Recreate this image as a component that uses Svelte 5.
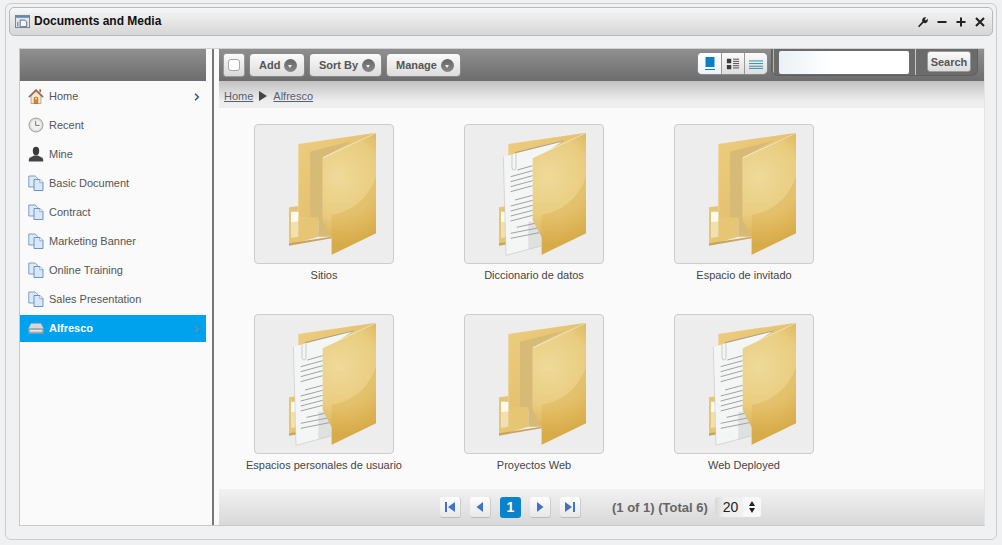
<script>
  const items = [
    { label: 'Home', icon: 'home', arrow: true },
    { label: 'Recent', icon: 'clock' },
    { label: 'Mine', icon: 'user' },
    { label: 'Basic Document', icon: 'docs' },
    { label: 'Contract', icon: 'docs' },
    { label: 'Marketing Banner', icon: 'docs' },
    { label: 'Online Training', icon: 'docs' },
    { label: 'Sales Presentation', icon: 'docs' },
    { label: 'Alfresco', icon: 'drive', arrow: true, active: true }
  ];
  const folders = [
    { name: 'Sitios', docs: false },
    { name: 'Diccionario de datos', docs: true },
    { name: 'Espacio de invitado', docs: false },
    { name: 'Espacios personales de usuario', docs: true },
    { name: 'Proyectos Web', docs: false },
    { name: 'Web Deployed', docs: true }
  ];
  const textLines = [
    [172,150,218,137],[152,170,218,152],[152,185,218,167],[152,200,218,182],[152,215,218,197],
    [165,240,218,226],[152,258,218,241],[152,273,218,256],[152,288,218,271],[152,303,218,286],
    [170,322,243,306],[152,340,243,322],[152,355,243,337]
  ];
</script>

{#snippet menuIcon(kind)}
  <svg class="micon" viewBox="0 0 16 16" aria-hidden="true">
    {#if kind === 'home'}
      <path d="M3 8v7.500h10V8L8 3.500z" fill="#f5e6cf" stroke="#a98f70" stroke-width=".7"/>
      <path d="M.6 8.600 8 1.200l7.400 7.400-1 .7L8 3 1.600 9.300z" fill="#a5654f" stroke="#7d5140" stroke-width=".4"/>
      <rect x="11.400" y="1.200" width="1.600" height="3" fill="#a5654f"/>
      <path d="M6.200 15.500V9.800q1.800-1.800 3.600 0v5.700z" fill="#d6862a" stroke="#8a5a1f" stroke-width=".5"/>
      <circle cx="8" cy="10.600" r=".9" fill="#fbe9c5"/>
    {:else if kind === 'clock'}
      <circle cx="8" cy="8" r="7" fill="#d9dcd9" stroke="#a0a5a1" stroke-width="1"/>
      <circle cx="8" cy="8" r="5.200" fill="#f1f2ef"/>
      <path d="M7.600 3.800v4.600h4" fill="none" stroke="#5d605e" stroke-width=".8"/>
    {:else if kind === 'user'}
      <ellipse cx="8" cy="5" rx="3.200" ry="4.200" fill="#3a3a3a"/>
      <path d="M.8 15.600v-2.200q.2-1.800 3-2.600l2.400-1.200h3.600l2.400 1.200q2.800.8 3 2.600v2.200z" fill="#444"/>
    {:else if kind === 'docs'}
      <path d="M.8 1h6.400l2.600 2.600V12H.8z" fill="#dce9f8" stroke="#6f95c6" stroke-width=".9"/>
      <path d="M6 4.500h6l3 3v8H6z" fill="#d8e7f9" stroke="#5f8ac1" stroke-width=".9"/>
      <path d="M11.800 4.500v3.200H15" fill="#f3f8fe" stroke="#5f8ac1" stroke-width=".6"/>
    {:else}
      <path d="M3 3.500h10l2.500 5H.5z" fill="#d7d7d7" stroke="#b0b0b0" stroke-width=".4"/>
      <rect x=".5" y="8.500" width="15" height="5" rx="1" fill="#a9a9a9"/>
      <rect x="2" y="10" width="12" height="1.600" fill="#e6e6e6"/>
    {/if}
  </svg>
{/snippet}

{#snippet folder(docs)}
  <svg class="folder" viewBox="12 12 420 420" aria-hidden="true">
    <defs>
      <linearGradient id="fback" x1="0" y1="0" x2="1" y2="1">
        <stop offset="0" stop-color="#edcd80"/><stop offset="1" stop-color="#deb860"/>
      </linearGradient>
      <radialGradient id="ffront" gradientUnits="userSpaceOnUse" cx="265" cy="170" r="200">
        <stop offset="0" stop-color="#efda9a"/><stop offset=".6" stop-color="#e9cc7e"/><stop offset="1" stop-color="#d9ae4e"/>
      </radialGradient>
    </defs>
    <path d="M145 72 378 38 218 112 218 300 145 290z" fill="url(#fback)"/>
    <path d="M117 262l28-4v32l60 2v58l-88 26z" fill="#e6c674"/>
    <path d="M117 370l128-20v5l-128 22z" fill="#c9a45a"/>
    <path d="M123 275h22v30l-22 1z" fill="#fff" opacity=".9"/>
    <path d="M123 306l22-1v45l-22 4z" fill="#fff" opacity=".45"/>
    {#if docs}
      <path d="M130 110 310 62 245 105 245 378 138 406z" fill="#f4f5f5"/>
      <path d="M205 305h40v73l-40 10z" fill="#dfe0e0"/>
      <path d="M165 98 310 63" stroke="#888" stroke-width="2"/>
      <path d="M130 110l8 296 105-28" stroke="#bbb" stroke-width="1.500" fill="none"/>
      {#each textLines as l}
        <line x1={l[0]} y1={l[1]} x2={l[2]} y2={l[3]} stroke="#9ea3a5" stroke-width="3"/>
      {/each}
      <path d="M156 104v38q0 8 6 8t6-8v-40" fill="none" stroke="#c2c2c2" stroke-width="2.500"/>
    {:else}
      <path d="M180 95 310 62 218 112V290l27 18v42h-40v-58h-25z" fill="#d6ba76"/>
    {/if}
    <path d="M218 115 378 40V340L245 404V352L218 300z" fill="url(#ffront)"/>
    <path d="M378 170Q345 265 245 285V404L378 340z" fill="#d6a640" opacity=".3"/>
  </svg>
{/snippet}

{#snippet pager(d)}
  <svg viewBox="0 0 14 14" class="pg" aria-hidden="true"><path d={d} fill="#3f73c9"/></svg>
{/snippet}

<div class="page">
  <section class="panel">
    <header class="titlebar">
      <svg class="portlet" viewBox="0 0 16 16" aria-hidden="true">
        <rect x=".5" y="1.500" width="15" height="13" fill="#dfe6ee" stroke="#6c8098"/>
        <rect x="1" y="2" width="14" height="2" fill="#5f87b2"/>
        <path d="M5.500 6.500h5l2 2v5h-7z" fill="#f4f6f8" stroke="#5f6872"/>
        <path d="M3 8.500v5" stroke="#5f6872"/>
      </svg>
      <h1>Documents and Media</h1>
      <div class="actions">
        <svg viewBox="0 0 12 12" aria-hidden="true"><path d="M1 10.200 5.400 5.600A3 3 0 0 1 9.300 1.500L7.700 3.200 8.900 4.400 10.600 2.800A3 3 0 0 1 6.500 6.800L2.200 11.200z" fill="#222"/></svg>
        <svg viewBox="0 0 12 12" aria-hidden="true"><rect x="1.500" y="5" width="9" height="2" fill="#222"/></svg>
        <svg viewBox="0 0 12 12" aria-hidden="true"><path d="M5 1.500h2V5h3.500v2H7v3.500H5V7H1.500V5H5z" fill="#222"/></svg>
        <svg viewBox="0 0 12 12" aria-hidden="true"><path d="M2 2 10 10M10 2 2 10" stroke="#222" stroke-width="2.100"/></svg>
      </div>
    </header>

    <div class="content">
      <aside class="sidebar">
        <div class="sidehead"></div>
        <ul>
          {#each items as it}
            <li class:active={it.active}>
              {@render menuIcon(it.icon)}
              <span>{it.label}</span>
              {#if it.arrow}
                <svg class="chev" viewBox="0 0 6 8" aria-hidden="true"><path d="M1 .8 4.400 4 1 7.200" fill="none" stroke-width="1.500"/></svg>
              {/if}
            </li>
          {/each}
        </ul>
      </aside>

      <main class="main">
        <div class="toolbar">
          <button class="check" aria-label="Select all"><i></i></button>
          <button class="tbtn">Add <b></b></button>
          <button class="tbtn">Sort By <b></b></button>
          <button class="tbtn">Manage <b></b></button>
          <div class="views">
            <span class="view on"><svg viewBox="0 0 12 16" aria-hidden="true"><rect x="1.500" y="1" width="9" height="10" fill="#0a80c4"/><rect x="1" y="13" width="10" height="1" fill="#0a80c4"/></svg></span>
            <span class="view"><svg viewBox="0 0 16 16" aria-hidden="true"><path d="M1 2h5v5H1zM1 9h5v5H1z" fill="#3a3a3a"/><path d="M8 2.500h7M8 5h7M8 7.500h7M8 10h7M8 12.500h7" stroke="#3a3a3a"/></svg></span>
            <span class="view"><svg viewBox="0 0 16 16" aria-hidden="true"><path d="M0 4.500h16M0 7.500h16M0 10.500h16M0 13h16" stroke="#1f7fa6"/></svg></span>
          </div>
          <div class="search">
            <input type="text" aria-label="Search" />
            <button>Search</button>
          </div>
        </div>

        <nav class="crumbs">
          <a href="#home">Home</a>
          <svg viewBox="0 0 8 10" aria-hidden="true"><path d="M0 0 8 5 0 10z" fill="#444"/></svg>
          <a href="#alfresco">Alfresco</a>
        </nav>

        <div class="grid">
          {#each folders as f}
            <div class="cell">
              <div class="tile">{@render folder(f.docs)}</div>
              <p>{f.name}</p>
            </div>
          {/each}
        </div>

        <footer class="pagination">
          <span class="pbtn">{@render pager('M2 2h2v10H2zM12 2v10L5 7z')}</span>
          <span class="pbtn">{@render pager('M10 2v10L3.500 7z')}</span>
          <span class="pbtn cur">1</span>
          <span class="pbtn">{@render pager('M4 2v10l6.500-5z')}</span>
          <span class="pbtn">{@render pager('M2 2v10l7-5zM10 2h2v10h-2z')}</span>
          <span class="count">(1 of 1) (Total 6)</span>
          <span class="select"><em>20</em><svg viewBox="0 0 8 14" aria-hidden="true"><path d="M4 1 7 6H1zM4 13 1 8h6z" fill="#222"/></svg></span>
        </footer>
      </main>
    </div>
  </section>
</div>

<style>
  :global(body) { margin: 0; background: #eff1f3; }
  * { box-sizing: border-box; }
  .page {
    width: 1002px; height: 545px; padding: 3px 5px 5px;
    font-family: "Liberation Sans", Arial, sans-serif; font-size: 11px; color: #555;
    overflow: hidden;
  }
  .panel {
    height: 537px; border: 1px solid #ccc; border-radius: 6px;
    padding: 3px 3px 0;
    background: #eff1f3;
  }
  .titlebar {
    height: 29px; display: flex; align-items: center; padding: 0 6px 0 5px;
    border: 1px solid #b9b9b9; border-radius: 5px;
    background: linear-gradient(#f7f7f7, #d6d6d6);
  }
  .portlet { width: 15px; height: 15px; }
  h1 { margin: 0 0 2px 4px; font-size: 12px; font-weight: bold; color: #111; }
  .actions { margin-left: auto; display: flex; align-items: center; gap: 7px; }
  .actions svg { width: 12px; height: 12px; display: block; }

  .content {
    margin: 12px 8px 0 10px; height: 478px; display: flex;
    border: 1px solid #c8c8c8; border-right: 1px solid #e4e4e4; border-top-color: #d0d0d0;
    background: #fafafa;
  }
  .sidebar {
    width: 194px; padding-right: 6px; flex: none;
    border-right: 2px solid #777;
  }
  .sidehead {
    height: 32px;
    background: linear-gradient(#8f8f8f, #6f6f6f);
    border-bottom: 2px solid #6e6e6e;
  }
  ul { list-style: none; margin: 0; padding: 0; }
  li {
    height: 29px; display: flex; align-items: center; padding: 1px 6px 0 8px;
    color: #555;
  }
  li span { margin-left: 5px; }
  .micon { width: 16px; height: 16px; flex: none; }
  .chev { width: 6px; height: 8px; margin: 2px 0 0 auto; stroke: #235a8c; }
  li.active {
    background: #00a2ed; background-clip: padding-box; border-top: 2px solid transparent;
    color: #fff; font-weight: bold; padding: 0 6px 1px 8px; height: 29px;
  }
  li.active .chev { stroke: #6a8ea6; }

  .main { flex: 1; min-width: 0; padding-left: 5px; display: flex; flex-direction: column; }
  .toolbar {
    height: 32px; flex: none; display: flex; align-items: flex-start; padding: 4px 6px 0 4px; gap: 4px;
    background: linear-gradient(#8f8f8f, #6f6f6f);
    border-bottom: 2px solid #6e6e6e;
  }
  button { font-family: inherit; margin: 0; }
  .check {
    width: 22px; height: 24px; padding: 0; display: flex; align-items: center; justify-content: center;
    border: 1px solid #999; border-radius: 3px; background: linear-gradient(#fbfbfb, #d9d9d9);
  }
  .check i { width: 12px; height: 12px; border: 1px solid #a6a6a6; border-radius: 3px; background: #fff; display: block; }
  .tbtn {
    height: 24px; padding: 0 0 0 9px; display: flex; align-items: center; gap: 4px;
    border: 1px solid #888; border-radius: 4px; background: linear-gradient(#fbfbfb, #dcdcdc);
    font-size: 11px; font-weight: bold; color: #555;
  }
  .tbtn:nth-of-type(2) { width: 56px; }
  .tbtn:nth-of-type(3) { width: 73px; }
  .tbtn:nth-of-type(4) { width: 75px; }
  .tbtn b {
    width: 13px; height: 13px; border-radius: 50%; background: linear-gradient(#666, #888); position: relative; display: block;
  }
  .tbtn b::after {
    content: ""; position: absolute; left: 4px; top: 6px;
    border: 2.500px solid transparent; border-top: 3px solid #eee; border-bottom: 0;
  }
  .views {
    margin-left: auto; margin-right: -1px; display: flex; height: 23px; margin-top: -1px;
    border: 1px solid #888; border-radius: 5px; overflow: hidden; background: linear-gradient(#fbfbfb, #dedede);
  }
  .view { width: 23px; display: flex; align-items: center; justify-content: center; border-left: 1px solid #999; }
  .view:first-child { border-left: 0; }
  .view.on { background: linear-gradient(#fff, #eef3f6); }
  .view svg { width: 14px; height: 16px; }
  .search {
    width: 207px; height: 27px; margin-top: -4px; flex: none; display: flex; padding: 2px 6px 0 7px;
    background:
      linear-gradient(#b5b5b5, #b5b5b5) 1px 0 / 1px 100% no-repeat,
      linear-gradient(#c8c8c8, #c8c8c8) 143px 0 / 1px 100% no-repeat,
      #6b6b6b;
    border: 1px solid #5f5f5f; border-top: 0; border-radius: 0 0 7px 7px;
  }
  .search input {
    width: 130px; height: 23px; border: 0; padding: 0; border-radius: 2px;
    background: linear-gradient(90deg, #eaf1f7, #fff 40%);
  }
  .search button {
    margin-left: 18px; width: 45px; height: 21px; padding: 0; font-size: 11px; font-weight: bold; color: #555;
    border: 1px solid #999; border-radius: 3px; background: linear-gradient(#fbfbfb, #dcdcdc);
  }
  .crumbs {
    height: 27px; flex: none; display: flex; align-items: center; gap: 6px; padding: 2px 0 0 5px;
    background: linear-gradient(#c2c2c2, #eeeeee 75%);
  }
  .crumbs a { color: #556070; text-decoration: underline; }
  .crumbs svg { width: 8px; height: 10px; }

  .grid {
    flex: 1; min-height: 0; display: grid; grid-template-columns: repeat(3, 210px); grid-auto-rows: 190px;
    padding: 16px 0 0 0; align-content: start;
  }
  .cell { text-align: center; }
  .tile {
    width: 140px; height: 140px; margin: 0 auto; border: 1px solid #ccc; border-radius: 4px; background: #ededed; overflow: hidden;
  }
  .folder { display: block; width: 140px; height: 140px; margin: -1px; }
  .cell p { margin: 5px 0 0; line-height: 13px; color: #444; white-space: nowrap; }

  .pagination {
    height: 36px; flex: none; display: flex; align-items: center; padding: 0 0 0 221px;
    background: linear-gradient(#f2f2f2, #d8d8d8);
  }
  .pbtn {
    width: 21px; height: 21px; margin-right: 9px; display: flex; align-items: center; justify-content: center;
    border-radius: 3px; background: linear-gradient(#fdfdfd, #e8e8e8); border-bottom: 1px solid #bbb; border-right: 1px solid #ccc;
  }
  .pg { width: 14px; height: 14px; }
  .pbtn.cur {
    background: #0a83cb; color: #fff; font-weight: bold; font-size: 14px; border: 0;
  }
  .count { margin-left: 22px; font-size: 13px; font-weight: bold; color: #666; }
  .select {
    margin-left: 7px; width: 46px; height: 20px; display: flex; align-items: center; font-size: 14px; color: #222;
    background: linear-gradient(90deg, #d8d8d8, #efefef 20%, #f1f1f1 60%, #f8f8f8 62%); border-radius: 3px;
  }
  .select em { font-style: normal; margin-left: 8px; }
  .select svg { width: 8px; height: 14px; margin-left: auto; margin-right: 5px; }
</style>
